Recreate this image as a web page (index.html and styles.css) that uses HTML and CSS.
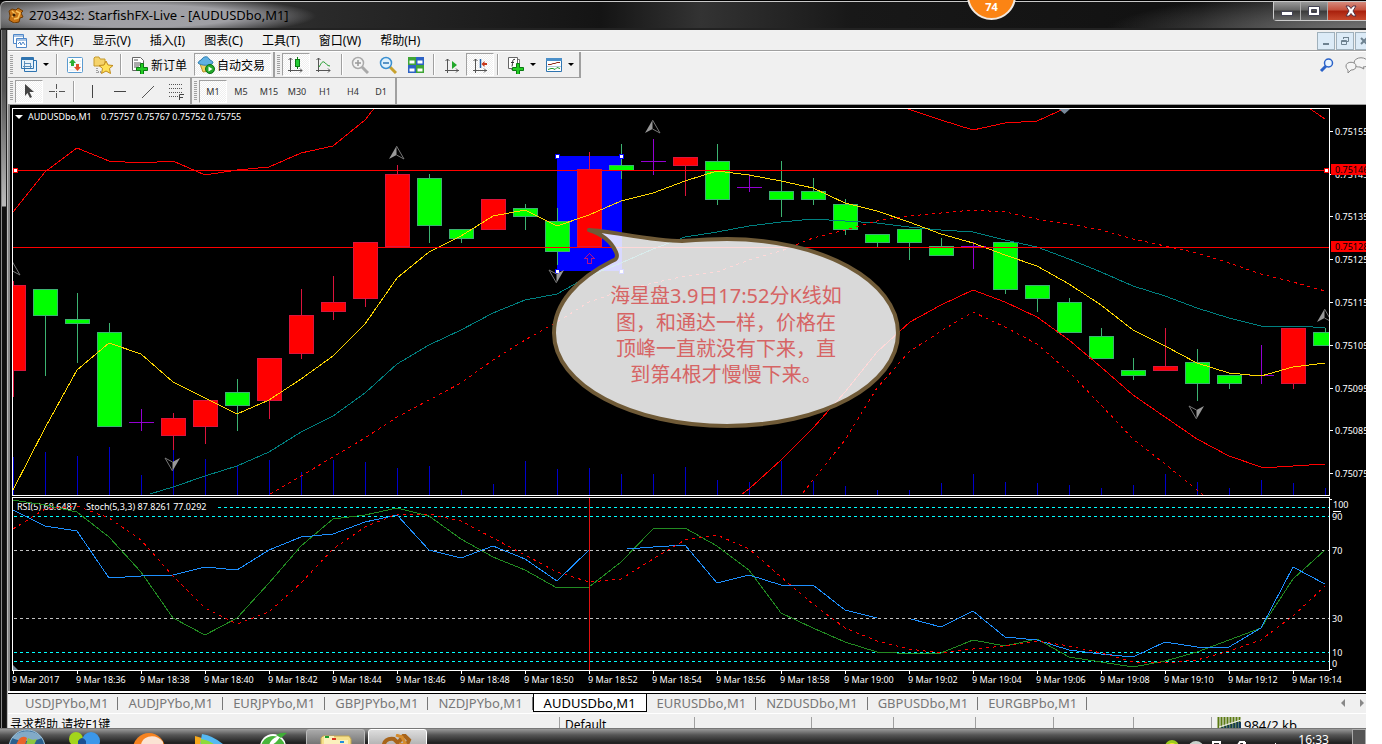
FILE: index.html
```
<!DOCTYPE html>
<html lang="zh-CN">
<head>
<meta charset="utf-8">
<title>StarfishFX-Live</title>
<link rel="stylesheet" href="styles.css">
</head>
<body>
<div class="desktop">
  <div class="window">
    <header class="titlebar">
      <svg class="app-icon" width="16" height="16" viewBox="0 0 16 16"><path d="M1 4l3-2 4 1 2-2 5 3-2 2 2 4-3 1-1 4-5 1-5-3 1-4z" fill="#c87416" stroke="#6b3a05"/><path d="M4 4l3 3-3 3m4-6l4 2-2 5-4 1" fill="none" stroke="#fbc35a" stroke-width="1.5"/><circle cx="6" cy="8" r="1.500" fill="#3c2205"/></svg>
      <h1 class="title">2703432: StarfishFX-Live - [AUDUSDbo,M1]</h1>
      <span class="badge">74</span>
      <div class="win-buttons">
        <button class="win-btn" aria-label="最小化"><svg width="14" height="14" viewBox="0 0 14 14"><rect x="1.500" y="7.500" width="11" height="4" fill="#fff" stroke="#445"/></svg></button>
        <button class="win-btn" aria-label="最大化"><svg width="14" height="14" viewBox="0 0 14 14"><path d="M1.500 2.500h11v9h-11zM4.500 5.500h5v3h-5z" fill="#fff" stroke="#445" fill-rule="evenodd"/></svg></button>
        <button class="win-btn win-close" aria-label="关闭"><svg width="14" height="14" viewBox="0 0 14 14"><path d="M2 2h3l2 2.500L9 2h3L9 7l3 5H9L7 9.500 5 12H2l3-5z" fill="#fff" stroke="#534"/></svg></button>
      </div>
    </header>

    <div class="client">
      <nav class="menubar">
        <svg class="menu-icon" width="16" height="16" viewBox="0 0 16 16" fill="#fff" stroke="#4f87c8"><path d="M1.500 1.500h10v9h-10z"/><path d="M1.500 3h10"/><path d="M4.500 5.500h10v9h-10z"/><path d="M4.500 7h10M6 11l2-2 1 3 2-3 2 3" fill="none"/></svg>
        <button class="menu">文件(F)</button><button class="menu">显示(V)</button><button class="menu">插入(I)</button><button class="menu">图表(C)</button><button class="menu">工具(T)</button><button class="menu">窗口(W)</button><button class="menu">帮助(H)</button>
        <div class="mdi">
          <button class="mdi-btn" aria-label="最小化图表"><svg width="14" height="14" viewBox="0 0 14 14"><path d="M4 10h6" stroke="#6e8290" stroke-width="2"/></svg></button>
          <button class="mdi-btn" aria-label="还原图表"><svg width="14" height="14" viewBox="0 0 14 14" fill="none" stroke="#6e8290"><path d="M5.500 5V3.500h5v4H9M5 3.500h6" /><path d="M3.500 6.500h5v4h-5zM3 7.500h6"/></svg></button>
          <button class="mdi-btn" aria-label="关闭图表"><svg width="14" height="14" viewBox="0 0 14 14"><path d="M4 4l6 6M10 4l-6 6" stroke="#6e8290" stroke-width="2"/></svg></button>
        </div>
      </nav>

      <div class="toolrow">
        <div class="toolbar first">
          <span class="grip"></span>
          <button class="tool wide" aria-label="新图表"><svg width="18" height="18" viewBox="0 0 18 18" fill="#e8f3fb" stroke="#2f74b0"><path d="M4.500 4.500h12v11h-12z"/><path d="M1.500 1.500h12v11h-12z"/><path d="M1.500 3h12" stroke-width="2"/><path d="M4.500 5v7M3 10.500h9M10.500 7v5M4 7.500h7" stroke="#5c8fbb"/></svg><span class="arrow"></span></button>
          <span class="sep"></span>
          <button class="tool" aria-label="市场报价"><svg width="18" height="18" viewBox="0 0 18 18"><rect x="1.500" y="1.500" width="15" height="15" rx="1" fill="#fff" stroke="#5b9bd0"/><path d="M3 5h12M3 8h12M3 11h12M3 14h12" stroke="#dde8f0"/><path d="M6.500 3l3.500 4H8v3H5V7H3z" fill="#2bae35"/><path d="M11.500 15L8 11h2V8h3v3h2z" fill="#e0502a"/></svg></button>
          <button class="tool" aria-label="导航"><svg width="20" height="18" viewBox="0 0 20 18"><path d="M1 2l1-1h4l1 2h5v7H1z" fill="#f5d36b" stroke="#c59a2c"/><path d="M4 12v5M5 16h4" stroke="#555" stroke-dasharray="1 1"/><path d="M13 5l2 4 5 .5-3.500 3 1 5L13 15l-4.500 2.500 1-5L6 9.500 11 9z" fill="#ffe158" stroke="#c08a1a"/></svg></button>
          <span class="sep"></span>
          <button class="tool label"><svg width="18" height="18" viewBox="0 0 18 18"><path d="M1.500 1.500h8l3 3v10h-11z" fill="#fff" stroke="#666"/><path d="M3 4h4M3 7h7M3 9h7M3 11h5" stroke="#555"/><path d="M9.500 7.500h3v4h4v3h-4v4h-3v-4h-4v-3h4z" fill="#22cc22" stroke="#0a7a12"/></svg>新订单</button>
          <button class="tool label pressed"><svg width="18" height="18" viewBox="0 0 18 18"><path d="M3 8h11l-2 7-6 1z" fill="#f0d15c" stroke="#b8912a"/><path d="M1 7c1-3 3-2 4-4 2-3 6-3 7 0 1 2 4 1 4 4-4 3-11 3-15 0z" fill="#5fb0e2" stroke="#2d7db0"/><circle cx="13" cy="13" r="4.500" fill="#22a82b" stroke="#0b6e15"/><path d="M11.500 10.500l4 2.500-4 2.500z" fill="#fff"/></svg>自动交易</button>
        </div>
        <div class="toolbar">
          <span class="grip"></span>
          <button class="tool pressed" aria-label="阴阳烛"><svg width="18" height="18" viewBox="0 0 18 18"><path d="M3.500 2v14M1 14.500h14M1.500 4l2-2 2 2M13 12.500l2 2-2 2" fill="none" stroke="#555"/><path d="M10.500 1v12" stroke="#0a7a12"/><rect x="8.500" y="3.500" width="4" height="7" fill="#22cc33" stroke="#0a7a12"/></svg></button>
          <button class="tool" aria-label="折线图"><svg width="18" height="18" viewBox="0 0 18 18"><path d="M3.500 2v14M1 14.500h14M1.500 4l2-2 2 2M13 12.500l2 2-2 2" fill="none" stroke="#555"/><path d="M4 11C6 8 7 5 9 6s3 4 6 4" fill="none" stroke="#1f9a2b"/></svg></button>
          <span class="sep"></span>
          <button class="tool" aria-label="放大"><svg width="18" height="18" viewBox="0 0 18 18"><path d="M11 11l6 6" stroke="#a9a9a9" stroke-width="3"/><circle cx="7" cy="7" r="5.500" fill="#f3f3f3" stroke="#aaa" stroke-width="1.500"/><path d="M4 7h6M7 4v6" stroke="#999" stroke-width="1.500"/></svg></button>
          <button class="tool" aria-label="缩小"><svg width="18" height="18" viewBox="0 0 18 18"><path d="M11 11l6 6" stroke="#c8a22e" stroke-width="3"/><circle cx="7" cy="7" r="5.500" fill="#dff1fc" stroke="#3b8fd0" stroke-width="1.500"/><path d="M4 7h6" stroke="#2d74b3" stroke-width="1.500"/></svg></button>
          <button class="tool" aria-label="平铺窗口"><svg width="18" height="18" viewBox="0 0 18 18"><path d="M1 1h8v8H1zM9 9h8v8H9z" fill="#3fa535"/><path d="M9 1h8v8H9zM1 9h8v8H1z" fill="#2d62c4"/><path d="M2.500 4.500h5v3h-5zM10.500 4.500h5v3h-5zM2.500 12.500h5v3h-5zM10.500 12.500h5v3h-5z" fill="#fff"/></svg></button>
          <span class="sep"></span>
          <button class="tool" aria-label="自动滚动"><svg width="18" height="18" viewBox="0 0 18 18"><path d="M4.500 3v14M2 14.500h14M2.500 5l2-2 2 2M13 12.500l2 2-2 2" fill="none" stroke="#555"/><path d="M9 5l5 4-5 4z" fill="#22a82b"/></svg></button>
          <button class="tool pressed" aria-label="图表平移"><svg width="18" height="18" viewBox="0 0 18 18"><path d="M4.500 3v14M2 14.500h14M2.500 5l2-2 2 2M13 12.500l2 2-2 2" fill="none" stroke="#555"/><path d="M9.500 3v9" stroke="#1d5fa8" stroke-width="1.500"/><path d="M10.500 8l3-3v2h2.500v2h-2.500v2z" fill="#c7381b"/></svg></button>
          <span class="sep"></span>
          <button class="tool wide" aria-label="指标"><svg width="18" height="18" viewBox="0 0 18 18"><path d="M4.500 3.500h8v10h-8z" fill="#fff" stroke="#777"/><path d="M1.500 1.500h9v11h-9z" fill="#fff" stroke="#666"/><path d="M8 3.500c-3-1-2 3-3 7M4 6.500h3" fill="none" stroke="#333"/><path d="M9.500 7.500h3v4h4v3h-4v4h-3v-4h-4v-3h4z" fill="#22cc22" stroke="#0a7a12"/></svg><span class="arrow"></span></button>
          <button class="tool wide" aria-label="模板"><svg width="18" height="18" viewBox="0 0 18 18"><path d="M1.500 2.500h15v13h-15z" fill="#fff" stroke="#2f74b0"/><path d="M1 3.500h16" stroke="#4a8fc9" stroke-width="3"/><path d="M3 8.500h3l2-1h2l2-1h3" stroke="#8e2a1a" fill="none"/><path d="M2 10.500h14" stroke="#bcd"/><path d="M3 13.500l3-1h2l2 1 2-2 3 1" stroke="#1f9a2b" fill="none"/></svg><span class="arrow"></span></button>
        </div>
        <div class="quick">
          <button class="quick-btn" aria-label="搜索"><svg width="16" height="16" viewBox="0 0 16 16"><path d="M7 9l-5 5" stroke="#2a62c8" stroke-width="3"/><circle cx="9.500" cy="6" r="4" fill="#eaf5ff" stroke="#2a62c8" stroke-width="1.500"/></svg></button>
          <button class="quick-btn" aria-label="消息"><svg width="24" height="18" viewBox="0 0 24 18" fill="#f4f4f4" stroke="#888"><path d="M9 7c0-7 14-7 14 0 0 3-2 4-5 4l1 2-4-2c-4 0-6-1-6-4z"/><path d="M1 10c0-5 10-5 10 0 0 3-2 4-5 4l-3 3v-3c-1-1-2-2-2-4z"/></svg></button>
        </div>
      </div>

      <div class="toolrow second">
        <div class="toolbar">
          <span class="grip"></span>
          <button class="tool pressed" aria-label="光标"><svg width="18" height="18" viewBox="0 0 18 18"><path d="M5 2l9 8H9.500l2.500 5-2 1-2.500-5L5 14z" fill="#444"/></svg></button>
          <button class="tool" aria-label="十字线"><svg width="18" height="18" viewBox="0 0 18 18"><path d="M8.500 2v5m0 4v5M1 9.500h6m4 0h6M8.500 9v1" stroke="#555"/></svg></button>
          <span class="sep"></span>
          <button class="tool" aria-label="垂直线"><svg width="18" height="18" viewBox="0 0 18 18"><path d="M9.500 3v13" stroke="#444"/></svg></button>
          <button class="tool" aria-label="水平线"><svg width="18" height="18" viewBox="0 0 18 18"><path d="M3 9.500h12" stroke="#444"/></svg></button>
          <button class="tool" aria-label="趋势线"><svg width="18" height="18" viewBox="0 0 18 18"><path d="M3 16L15 4" stroke="#555"/></svg></button>
          <button class="tool" aria-label="斐波纳契"><svg width="18" height="18" viewBox="0 0 18 18"><path d="M2 2.500h14M2 6.500h14M2 10.500h14M2 14.500h9" stroke="#555" stroke-dasharray="1 1"/><path d="M12.500 18v-5.500H17M13 15.500h3" fill="none" stroke="#444"/></svg></button>
        </div>
        <div class="toolbar">
          <span class="grip"></span>
          <button class="tool pressed">M1</button><button class="tool">M5</button><button class="tool">M15</button><button class="tool">M30</button><button class="tool">H1</button><button class="tool">H4</button><button class="tool">D1</button>
        </div>
      </div>

      <main class="chart-frame">
        <svg class="chart" viewBox="10 106 1356 585" preserveAspectRatio="xMinYMin meet">
          <defs>
            <clipPath id="main-pane"><rect x="13" y="109" width="1316" height="386"/></clipPath>
            <symbol id="fractal-up" viewBox="0 0 16 14" overflow="visible"><path d="M7.500 0L0 13l7.500-4z" fill="#999"/><path d="M7.500 0L15 13 7.500 9" fill="none" stroke="#777"/></symbol>
            <symbol id="fractal-down" viewBox="0 0 16 14" overflow="visible"><path d="M7.500 13L15 0 7.500 4z" fill="#999"/><path d="M7.500 13L0 0l7.500 4" fill="none" stroke="#777"/></symbol>
          </defs>

          <g clip-path="url(#main-pane)">
            <g class="crisp">
              <path class="volume" d="M13.500 457V495M45.500 452V495M77.500 456V495M109.500 447V495M141.500 475V495M173.500 450V495M205.500 459V495M237.500 466V495M269.500 460V495M301.500 472V495M333.500 460V495M365.500 462V495M397.500 468V495M429.500 466V495M461.500 490V495M493.500 484V495M525.500 461V495M557.500 469V495M589.500 468V495M621.500 474V495M653.500 474V495M685.500 467V495M717.500 480V495M749.500 482V495M781.500 461V495M813.500 481V495M845.500 486V495M877.500 490V495M909.500 490V495M941.500 483V495M973.500 474V495M1005.500 482V495M1037.500 483V495M1069.500 485V495M1101.500 488V495M1133.500 485V495M1165.500 474V495M1197.500 482V495M1229.500 488V495M1261.500 480V495M1293.500 483V495M1325.500 488V495"/>
              <rect x="557" y="156" width="65" height="115" fill="#00f"/>
              <path class="wick-green" d="M45.500 289V376M77.500 293V363M109.500 323V427M237.500 379V431M429.500 174V243M461.500 229V243M525.500 204V230M557.500 208V265M621.500 144V179M717.500 144V205M781.500 161V217M813.500 178V205M845.500 199V235M877.500 234V247M909.500 229V260M941.500 238V256M1005.500 242V294M1037.500 285V312M1069.500 298V333M1101.500 328V358M1133.500 358V380M1197.500 349V401M1229.500 375V389M1325.500 328V346"/>
              <path class="wick-red" d="M13.500 281V397M173.500 413V450M205.500 400V444M269.500 358V419M301.500 289V359M333.500 276V320M365.500 242V307M397.500 165V247M589.500 152V247M685.500 157V196M1165.500 328V371M1293.500 328V389"/>
              <path class="doji" d="M141.500 409V431M129 422.500h25M653.500 139V175M641 161.500h25M749.500 174V192M737 187.500h25M973.500 242V269M961 246.500h25M1261.500 345V384M1249 375.500h25"/>
              <path class="body-green" d="M33.500 289.500h24v26h-24zM65.500 319.500h24v4h-24zM97.500 332.500h24v94h-24zM225.500 392.500h24v13h-24zM417.500 178.500h24v47h-24zM449.500 229.500h24v9h-24zM513.500 208.500h24v8h-24zM545.500 221.500h24v30h-24zM609.500 165.500h24v5h-24zM705.500 161.500h24v38h-24zM769.500 191.500h24v8h-24zM801.500 191.500h24v8h-24zM833.500 204.500h24v25h-24zM865.500 234.500h24v8h-24zM897.500 229.500h24v13h-24zM929.500 246.500h24v9h-24zM993.500 242.500h24v47h-24zM1025.500 285.500h24v13h-24zM1057.500 302.500h24v30h-24zM1089.500 336.500h24v22h-24zM1121.500 370.500h24v5h-24zM1185.500 362.500h24v21h-24zM1217.500 375.500h24v8h-24zM1313.500 332.500h24v13h-24z"/>
              <path class="body-red" d="M1.500 285.500h24v85h-24zM161.500 418.500h24v17h-24zM193.500 400.500h24v26h-24zM257.500 358.500h24v42h-24zM289.500 315.500h24v38h-24zM321.500 302.500h24v9h-24zM353.500 242.500h24v56h-24zM385.500 174.500h24v72h-24zM481.500 199.500h24v30h-24zM577.500 169.500h24v77h-24zM673.500 157.500h24v8h-24zM1153.500 366.500h24v4h-24zM1281.500 328.500h24v55h-24z"/>
              <polyline class="line teal" points="150,494 173,487 205,476 237,466 269,452 301,432 333,416 365,393 397,364 429,345 461,330 493,313 525,300 557,294 589,276 621,263 653,249 685,237 717,232 749,226 781,222 813,219 845,221 877,223 909,227 941,230 973,232 1005,240 1037,247 1069,259 1101,272 1133,286 1165,296 1197,308 1229,318 1261,326 1300,326 1325,328"/>
              <polyline class="line red" points="13,212 45,172 77,148 109,161 141,163 173,161 205,175 237,170 269,167 301,153 333,146 365,120 376,106"/>
              <polyline class="line red" points="905,108 941,120 973,130 1005,123 1037,121 1068,107"/>
              <polyline class="line red" points="1306,106 1325,119"/>
              <polyline class="line red" points="742,494 749,489 781,460 813,428 845,392 877,352 910,322 941,305 973,290 1005,302 1037,317 1069,340 1101,367 1133,395 1165,417 1197,439 1229,456 1261,467 1277,467 1325,464"/>
              <polyline class="line red dashed" points="270,494 301,476 333,457 365,438 397,417 429,400 461,383 493,360 525,340 557,322 589,302 621,291 653,283 685,276 717,272 749,260 781,251 813,238 845,230 877,221 909,216 941,213 973,210 1005,212 1037,219 1069,224 1101,230 1133,239 1165,246 1197,253 1229,263 1261,274 1293,282 1325,291"/>
              <polyline class="line red dashed" points="803,493 813,480 845,440 877,388 909,352 941,331 973,312 1005,327 1037,344 1069,372 1101,405 1133,439 1165,464 1197,490 1203,495"/>
              <polyline class="line gold" points="13,490 45,428 77,370 109,343 141,354 173,382 205,398 237,414 269,400 301,379 333,356 365,324 397,278 429,252 461,236 493,216 525,210 557,226 589,215 621,201 653,193 685,181 717,171 749,175 781,181 813,188 845,203 877,211 909,222 941,234 973,243 1005,255 1037,266 1069,284 1101,305 1133,330 1165,346 1197,363 1229,373 1261,376 1293,367 1325,363"/>
              <path d="M13 170.500h1316M13 247.500h1316" stroke="red"/>
              <path d="M13.500 168.500h4v4h-4zM1324.500 168.500h4v4h-4z" fill="#fff" stroke="red"/>
              <path d="M555.500 154.500h4v4h-4zM619.500 154.500h4v4h-4zM555.500 269.500h4v4h-4zM619.500 269.500h4v4h-4z" fill="#fff" stroke="#00f"/>
              <path d="M589.500 253.500l5 5h-3v5h-4v-5h-3z" fill="none" stroke="#b0108c"/>
            </g>
            <use href="#fractal-up" x="389" y="146" width="16" height="14"/>
            <use href="#fractal-up" x="645" y="120" width="16" height="14"/>
            <use href="#fractal-up" x="1317" y="309" width="16" height="14"/>
            <use href="#fractal-up" x="5" y="262" width="16" height="14"/>
            <use href="#fractal-down" x="165" y="458" width="16" height="14"/>
            <use href="#fractal-down" x="549" y="270" width="16" height="14"/>
            <use href="#fractal-down" x="1189" y="406" width="16" height="14"/>
            <path d="M1059 109h11l-5.500 5z" fill="#778899"/>
          </g>
          <path d="M15 115h8l-4 4z" fill="#fff"/>
          <text class="small" x="28" y="120">AUDUSDbo,M1</text>
          <text class="small" x="101" y="120">0.75757 0.75767 0.75752 0.75755</text>

          <text class="small" x="17" y="510">RSI(5) 68.6487</text>
          <text class="small" x="86" y="510">Stoch(5,3,3) 87.8261 77.0292</text>
          <g class="crisp">
            <path class="level cyan" d="M218 507.500H1329M14 516.500H1329M14 652.500H1329M14 661.500H1329"/>
            <path class="level silver" d="M14 550.500H1329M14 618.500H1329"/>
            <polyline class="line green" points="13,500 45,505 77,512 109,537 141,572 173,618 205,635 237,618 269,583 301,546 333,519 365,515 397,508 429,516 461,539 493,557 525,570 557,588 589,587 621,562 653,529 685,528 717,546 749,570 781,613 813,628 845,642 877,652 897,653 941,653 973,640 1005,646 1037,639 1069,657 1101,662 1133,667 1165,661 1197,652 1229,640 1261,628 1293,579 1325,550"/>
            <polyline class="line blue" points="13,510 45,526 77,531 109,578 141,576 173,575 205,567 237,570 269,550 301,537 333,534 365,522 397,515 429,550 461,558 493,546 525,559 557,581 589,550"/>
            <polyline class="line blue" points="627,549 653,547 685,545 717,583 749,575 781,585 813,585 845,610 877,618"/>
            <polyline class="line blue" points="911,619 941,627 973,611 1005,637 1037,640 1069,650 1101,654 1133,657 1165,642 1197,647 1229,647 1261,628 1293,567 1325,584"/>
            <polyline class="line red dashed" points="13,529 45,509 77,506 109,518 141,540 173,576 205,608 237,624 269,612 301,583 333,549 365,527 397,514 429,514 461,521 493,538 525,555 557,572 589,582 621,579 653,559 685,540 717,535 749,549 781,577 813,604 845,628 877,641 909,649 941,653 973,649 1005,646 1037,641 1069,646 1101,653 1133,662 1165,663 1197,660 1229,651 1261,640 1293,616 1325,586"/>
            <path d="M589.500 498V670" stroke="#e01010"/>
            <path d="M12.500 108.500H1329.500V495.500H12.500zM12.500 497.500H1329.500V670.500H12.500z" fill="none" stroke="#fff"/>
            <path d="M1330 131.500h3M1330 174.500h3M1330 216.500h3M1330 259.500h3M1330 302.500h3M1330 345.500h3M1330 388.500h3M1330 430.500h3M1330 473.500h3M1330 499.500h2M1330 669.500h2M1333 511.500h8M13.500 671v3M77.500 671v3M141.500 671v3M205.500 671v3M269.500 671v3M333.500 671v3M397.500 671v3M461.500 671v3M525.500 671v3M589.500 671v3M653.500 671v3M717.500 671v3M781.500 671v3M845.500 671v3M909.500 671v3M973.500 671v3M1037.500 671v3M1101.500 671v3M1165.500 671v3M1229.500 671v3M1293.500 671v3" stroke="#fff"/>
          </g>
          <path d="M13 665l5 5h-5z" fill="#778899"/>

          <g class="small">
            <text x="1335" y="135">0.75155</text><text x="1335" y="178">0.75145</text><text x="1335" y="220">0.75135</text><text x="1335" y="263">0.75125</text><text x="1335" y="306">0.75115</text><text x="1335" y="349">0.75105</text><text x="1335" y="392">0.75095</text><text x="1335" y="434">0.75085</text><text x="1335" y="477">0.75075</text>
            <text x="1333" y="508">100</text><text x="1332" y="520">90</text><text x="1332" y="554">70</text><text x="1332" y="622">30</text><text x="1332" y="656">10</text><text x="1332" y="667">0</text>
          </g>
          <path d="M1331 164h35v11h-35zM1331 241h35v11h-35z" fill="red"/>
          <g class="small dark"><text x="1335" y="173">0.75146</text><text x="1335" y="250">0.75128</text></g>
          <g class="small">
            <text x="12" y="683">9 Mar 2017</text><text x="76" y="683">9 Mar 18:36</text><text x="140" y="683">9 Mar 18:38</text><text x="204" y="683">9 Mar 18:40</text><text x="268" y="683">9 Mar 18:42</text><text x="332" y="683">9 Mar 18:44</text><text x="396" y="683">9 Mar 18:46</text><text x="460" y="683">9 Mar 18:48</text><text x="524" y="683">9 Mar 18:50</text><text x="588" y="683">9 Mar 18:52</text><text x="652" y="683">9 Mar 18:54</text><text x="716" y="683">9 Mar 18:56</text><text x="780" y="683">9 Mar 18:58</text><text x="844" y="683">9 Mar 19:00</text><text x="908" y="683">9 Mar 19:02</text><text x="972" y="683">9 Mar 19:04</text><text x="1036" y="683">9 Mar 19:06</text><text x="1100" y="683">9 Mar 19:08</text><text x="1164" y="683">9 Mar 19:10</text><text x="1228" y="683">9 Mar 19:12</text><text x="1292" y="683">9 Mar 19:14</text>
          </g>

          <path class="bubble" d="M589 230C612 231 650 241 682 241C696 240 712 239 727 239C822 239 898 281 898 333S822 426 727 426S554 385 554 333C554 303 578 278 612 261Q619 259 616 252C611 241 602 234 589 230Z"/>
          <g class="note">
            <text x="726" y="303">海星盘3.9日17:52分K线如</text>
            <text x="726" y="330">图，和通达一样，价格在</text>
            <text x="726" y="356">顶峰一直就没有下来，直</text>
            <text x="726" y="382">到第4根才慢慢下来。</text>
          </g>
        </svg>
      </main>

      <nav class="tabs">
        <button class="tab">USDJPYbo,M1</button><button class="tab">AUDJPYbo,M1</button><button class="tab">EURJPYbo,M1</button><button class="tab">GBPJPYbo,M1</button><button class="tab">NZDJPYbo,M1</button><button class="tab active">AUDUSDbo,M1</button><button class="tab">EURUSDbo,M1</button><button class="tab">NZDUSDbo,M1</button><button class="tab">GBPUSDbo,M1</button><button class="tab">EURGBPbo,M1</button>
        <span class="tab-scroll"><svg width="28" height="12" viewBox="0 0 28 12"><path d="M7 2v8L3 6zM22 2v8l4-4z" fill="#888"/></svg></span>
      </nav>
      <footer class="status">
        <span class="cell help">寻求帮助,请按F1键</span>
        <span class="cell profile">Default</span>
        <span class="cell c3"></span><span class="cell c4"></span><span class="cell c4"></span><span class="cell c5"></span><span class="cell c6"></span><span class="cell c5"></span>
        <span class="cell net"><svg width="24" height="12" viewBox="0 0 24 12"><path d="M1.500 0v12M4.500 0v12M7.500 0v12M10.500 0v12M13.500 0v12M16.500 0v12M19.500 0v12M22.500 0v12" stroke="#5b7a12" stroke-width="2"/><path d="M5.500 10v2M8.500 9v3M11.500 8v4M14.500 7v5M17.500 6v6M20.500 5v7M23 5v7" stroke="#123a5c" stroke-width="2"/><path d="M2 10L24 3" stroke="#efefef"/></svg>984/2 kb</span>
      </footer>
    </div>
  </div>

  <div class="taskbar">
    <svg class="launch" width="300" height="16" viewBox="0 0 300 16">
      <circle cx="27" cy="19" r="18" fill="#2a5f8e" stroke="#9fc4dc"/><path d="M12 9c6-9 24-9 30 0-8 4-22 4-30 0z" fill="#a8cbe0" opacity=".7"/><path d="M19 10q4-4 8-1l-2 7h-9z" fill="#e8632a"/><path d="M28 9q4 3 9 1l-3 6h-8z" fill="#8dc63f"/>
      <circle cx="76" cy="10" r="7" fill="#a3d51b"/><circle cx="91" cy="12" r="9" fill="#3b97ea"/><path d="M78 12q4-6 8 0v4h-8z" fill="#1b4f92"/>
      <circle cx="149" cy="20" r="16" fill="#f58220"/><path d="M141 16c1-10 16-12 22-3v3z" fill="#fbe3d3"/>
      <path d="M195 7l7 2-1 7h-6z" fill="#f7a81b"/><path d="M202 5q12 2 22 11h-24z" fill="#55b9f2"/><path d="M201 10q8 1 14 6h-14z" fill="#8ddb3a"/>
      <circle cx="273" cy="18" r="13" fill="#fff"/><circle cx="273" cy="19" r="12" fill="#49b53c"/><path d="M269 16c2-6 6-8 11-9-1 4-5 7-8 9z" fill="#fff"/><path d="M276 6q5-3 11-2l-6 5z" fill="#3fae36"/>
    </svg>
    <button class="task" aria-label="资源管理器"><svg width="34" height="13" viewBox="0 0 34 13"><path d="M2 4l2-2h26l2 3v8H2z" fill="#f5e08b" stroke="#c5a850"/><path d="M5 2h10v4h14v7H5z" fill="#fbf0bd"/><path d="M6 2h4v2H6z" fill="#1a9e2d"/><path d="M13 4h4v2h-4z" fill="#d7331f"/><path d="M21 7h4v2h-4z" fill="#1f8fe0"/></svg></button>
    <button class="task on" aria-label="StarfishFX"><svg width="32" height="13" viewBox="0 0 32 13"><path d="M2 13c-1-6 4-9 10-8l4 4 6-8 5 5-3 7" fill="none" stroke="#a8641a" stroke-width="4"/><path d="M14 1l6 2 4 8M17 10l11 2" fill="none" stroke="#d58b2c" stroke-width="3"/></svg></button>
    <div class="tray">
      <svg width="120" height="16" viewBox="0 0 120 16"><circle cx="14" cy="18" r="7" fill="#9ccc1c"/><circle cx="14" cy="18" r="4" fill="#f4e92a"/><circle cx="38" cy="20" r="8" fill="#c8d2cc"/><path d="M55 12v4M56 13h6v3M80 16l2-3h4v3M87 13v3M117 15h1" stroke="#fff" fill="none" stroke-width="2"/></svg>
      <time class="clock">16:33</time>
      <button class="show-desktop" aria-label="显示桌面"></button>
    </div>
  </div>
</div>
</body>
</html>
```
FILE: styles.css
```
* { box-sizing: border-box; }
body {
  margin: 0;
  background: #fff;
  font-family: "Noto Sans", "Noto Sans CJK SC", sans-serif;
  font-size: 12px;
  color: #000;
}
button {
  font: inherit;
  color: inherit;
  background: none;
  border: 0;
  padding: 0;
  margin: 0;
}
svg { display: block; flex: none; }

.desktop {
  display: flex;
  flex-direction: column;
  height: 100vh;
  margin-right: 16px;
  background: #111;
  overflow: hidden;
}
.window {
  flex: 1;
  min-height: 0;
  display: flex;
  flex-direction: column;
  border-top: 1px solid #000;
}

/* title bar */
.titlebar {
  position: relative;
  flex: none;
  display: flex;
  align-items: center;
  height: 29px;
  padding-left: 7px;
  border-top: 1px solid #c8c8c8;
  border-left: 1px solid #999;
  border-bottom: 2px solid #222;
  border-top-left-radius: 6px;
  background:
    radial-gradient(ellipse 175px 20px at 140px 14px, rgba(165,165,170,.95) 55%, rgba(165,165,170,0) 100%),
    radial-gradient(ellipse 260px 40px at 100% 30px, #777, rgba(110,110,110,0)),
    linear-gradient(90deg, #555 0, #2a2a2a 320px, #141414 600px, #333 700px, #181818 850px, #111 1200px, #333 100%);
}
.title {
  margin: 0 0 0 5px;
  font-size: 13px;
  font-weight: 400;
  line-height: 16px;
  white-space: nowrap;
}
.badge {
  position: absolute;
  left: 966px;
  top: -31px;
  width: 49px;
  height: 49px;
  padding-top: 26px;
  border: 2px solid #f0e8e0;
  border-radius: 50%;
  background: #fb8414;
  color: #fff;
  font-size: 11px;
  font-weight: 700;
  line-height: 16px;
  text-align: center;
}
.win-buttons {
  display: flex;
  align-self: flex-start;
  margin-left: auto;
  height: 19px;
  border: 1px solid #ccc;
  border-width: 0 0 1px 1px;
  border-bottom-left-radius: 4px;
}
.win-btn {
  display: flex;
  align-items: center;
  justify-content: center;
  width: 27px;
  border-right: 1px solid #aaa;
  background: linear-gradient(#999, #666 45%, #3a3a3a 50%, #666);
}
.win-close {
  width: 38px;
  padding-left: 16px;
  border-right: 0;
  justify-content: flex-start;
  background: linear-gradient(#d58a7c, #c4503c 45%, #a8200c 50%, #c8482c);
}

/* client area with the glass frame at its left */
.client {
  flex: 1;
  min-height: 0;
  display: flex;
  flex-direction: column;
  padding-left: 8px;
  background:
    linear-gradient(90deg, #111 0 1px, #888 1px 2px, transparent 2px 6px, #222 6px 7px, #bbb 7px 8px, transparent 8px),
    linear-gradient(#4a4a4a 0, #555 60px, #bbb 176px, #111 177px);
}
.menubar {
  flex: none;
  display: flex;
  align-items: center;
  height: 22px;
  padding-left: 4px;
  overflow: hidden;
  background: #f0f0f0;
  border-bottom: 1px solid #fff;
  box-shadow: inset 0 -1px #a0a0a0;
}
.menu-icon { margin-right: 6px; }
.menu { height: 20px; padding: 0 9px; line-height: 18px; margin-right: 1px; }
.menu-icon + .menu { padding-left: 2px; }
.mdi { display: flex; gap: 1px; margin: 0 -7px 0 auto; }
.mdi-btn {
  display: flex;
  align-items: center;
  justify-content: center;
  width: 18px;
  height: 18px;
  border: 1px solid #9fb0bb;
  background: #dcebf7;
}

/* toolbars */
.toolrow {
  flex: none;
  display: flex;
  height: 26px;
  background: #f0f0f0;
}
.toolbar {
  display: flex;
  align-items: center;
  padding-right: 1px;
  border-right: 2px solid #a0a0a0;
  border-bottom: 1px solid #a0a0a0;
}
.toolbar.first { padding-right: 2px; }
.toolrow.second .toolbar { border-bottom: 0; padding-right: 0; }
.grip {
  width: 3px;
  height: 20px;
  margin: 0 2px;
  background: repeating-linear-gradient(#a0a0a0 0 1px, #f0f0f0 1px 2px);
}
.sep { width: 2px; height: 21px; margin: 0 3px; background: linear-gradient(90deg, #a0a0a0 50%, #fff 50%); }
.toolrow.second .sep { margin: 0 3px 0 2px; }
.tool {
  display: flex;
  align-items: center;
  justify-content: center;
  width: 28px;
  height: 23px;
  border: 1px solid transparent;
  color: #333;
  font-size: 9px;
}
.tool.wide { width: 38px; gap: 5px; }
.tool.label { width: auto; padding: 0 6px 0 5px; gap: 2px; font-size: 12px; color: #000; }
.tool.pressed {
  border-color: #a0a0a0 #fff #fff #a0a0a0;
  background: repeating-conic-gradient(#fff 0 25%, #efefef 0 50%) 0 0 / 2px 2px;
}
.tool.label.pressed { padding: 0 5px 0 2px; }
.arrow { border: 3px solid transparent; border-top-color: #000; border-bottom: 0; }
.quick { display: flex; align-items: center; gap: 10px; margin: 0 -3px 0 auto; }

/* chart */
.chart-frame {
  flex: 1;
  min-height: 0;
  border-top: 1px solid #a0a0a0;
  border-left: 2px solid #888;
  padding-top: 1px;
  background: #000;
}
.chart { width: 100%; height: 100%; }
.crisp { shape-rendering: crispEdges; }
.small { font-size: 9px; fill: #fff; }
.dark { fill: #000; }
.volume { stroke: #00c; }
.wick-green { stroke: #3cb371; }
.wick-red { stroke: #dc143c; }
.doji { stroke: #9400d3; }
.body-green { fill: #0f0; stroke: #3cb371; }
.body-red { fill: #f00; stroke: #dc143c; }
.line { fill: none; stroke-width: 1px; }
.teal { stroke: #008080; }
.red { stroke: #f00; }
.gold { stroke: #ffd700; }
.green { stroke: #228b22; }
.blue { stroke: #1e90ff; }
.dashed { stroke-dasharray: 3 4; }
.level { stroke-dasharray: 3 3; }
.cyan { stroke: #0ff; }
.silver { stroke: #c0c0c0; }
.bubble { fill: rgba(255,255,255,.85); stroke: #6f5a37; stroke-width: 4px; stroke-linejoin: round; }
.note {
  font-size: 20px;
  font-weight: 400;
  fill: #d66464;
  text-anchor: middle;
}

/* chart tabs */
.tabs {
  flex: none;
  display: flex;
  height: 23px;
  padding-left: 7px;
  background: linear-gradient(#fff 0 2px, #000 2px 3px, #f0f0f0 3px 22px, #fff 22px);
}
.tab {
  height: 18px;
  margin-top: 3px;
  padding: 0 10px;
  color: #777;
  font-size: 13px;
  line-height: 18px;
  white-space: nowrap;
}
.tab:not(.active) { background: linear-gradient(#777, #777) 100% 3px / 1px 13px no-repeat; }
.tab.active {
  margin-top: 2px;
  height: 19px;
  border: 1px solid #000;
  background: #fff;
  color: #000;
}
.tab-scroll { margin: 6px 0 0 auto; }

/* status bar */
.status {
  flex: none;
  display: flex;
  height: 14px;
  overflow: hidden;
  background: #f0f0f0;
  line-height: 16px;
  white-space: nowrap;
}
.cell { margin-top: 3px; padding-left: 5px; border-left: 1px solid #a0a0a0; }
.help { flex: 0 0 551px; border-left: 0; padding-left: 2px; }
.profile { flex: 0 0 135px; }
.c3 { flex: 0 0 117px; }
.c4 { flex: 0 0 82px; }
.c5 { flex: 0 0 78px; }
.c6 { flex: 0 0 80px; }
.net { display: flex; gap: 3px; flex: 1; font-size: 13px; }

/* taskbar */
.taskbar {
  flex: none;
  display: flex;
  height: 16px;
  overflow: hidden;
  border-top: 1px solid #777;
  background: linear-gradient(#999, #555 40%, #222 90%);
}
.task {
  display: flex;
  justify-content: center;
  width: 59px;
  height: 20px;
  margin: 0 1px 0 2px;
  padding-top: 4px;
  border: 1px solid #bbb;
  border-radius: 3px;
  background: linear-gradient(#aaa, #666);
}
.launch { margin-right: 4px; }
.task.on { background: linear-gradient(#ddd, #aaa); border-color: #fff; }
.tray { display: flex; margin-left: auto; }
.clock { margin: 3px 23px 0 20px; color: #fff; line-height: 16px; }
.show-desktop { width: 14px; height: 20px; border: 1px solid #aaa; background: #555; }
```
